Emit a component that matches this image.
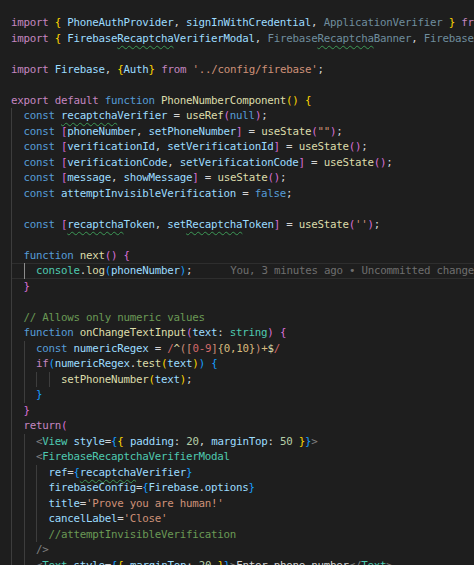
import React from 'react';

// token colours (VS Code Dark+ with bracket pair colours)
const C = {
  kw: 'text-[#c586c0]',
  st: 'text-[#569cd6]',
  v: 'text-[#9cdcfe]',
  vd: 'text-[#6f8d9d]',
  fn: 'text-[#dcdcaa]',
  s: 'text-[#ce9178]',
  c: 'text-[#6a9955]',
  t: 'text-[#4ec9b0]',
  n: 'text-[#b5cea8]',
  p: 'text-[#d4d4d4]',
  g: 'text-[#808080]',
  b1: 'text-[#ffd700]',
  b2: 'text-[#da70d6]',
  b3: 'text-[#179fff]',
  re: 'text-[#d16969]',
  rq: 'text-[#d7ba7d]',
  ra: 'text-[#dcdcaa]',
  rg: 'text-[#ce9178]',
};

const squiggle = 'underline decoration-wavy decoration-[#3c9a56] decoration-1 underline-offset-[3px]';

// [indent, segments, options]
const lines = [
  [0, [['import', 'kw'], [' '], ['{', 'b1'], [' '], ['PhoneAuthProvider', 'v'], [', '], ['signInWithCredential', 'v'], [', '], ['ApplicationVerifier', 'vd'], [' '], ['}', 'b1'], [' '], ['from', 'kw'], [' '], ["'firebase/auth'", 's'], [';']]],
  [0, [['import', 'kw'], [' '], ['{', 'b1'], [' '], ['Firebase', 'v'], ['Recaptcha', 'v', true], ['VerifierModal', 'v'], [', '], ['Firebase', 'vd'], ['Recaptcha', 'vd', true], ['Banner', 'vd'], [', '], ['FirebaseAuthApplicationVerifier', 'vd'], [' '], ['}', 'b1']]],
  [0, []],
  [0, [['import', 'kw'], [' '], ['Firebase', 'v'], [', '], ['{', 'b1'], ['Auth', 'v'], ['}', 'b1'], [' '], ['from', 'kw'], [' '], ["'../config/firebase'", 's'], [';']]],
  [0, []],
  [0, [['export', 'kw'], [' '], ['default', 'kw'], [' '], ['function', 'st'], [' '], ['PhoneNumberComponent', 'fn'], ['()', 'b1'], [' '], ['{', 'b1']]],
  [2, [['const', 'st'], [' '], ['recaptcha', 'v', true], ['Verifier', 'v'], [' = '], ['useRef', 'fn'], ['(', 'b2'], ['null', 'st'], [')', 'b2'], [';']]],
  [2, [['const', 'st'], [' '], ['[', 'b2'], ['phoneNumber', 'v'], [', '], ['setPhoneNumber', 'v'], [']', 'b2'], [' = '], ['useState', 'fn'], ['(', 'b2'], ['""', 's'], [')', 'b2'], [';']]],
  [2, [['const', 'st'], [' '], ['[', 'b2'], ['verificationId', 'v'], [', '], ['setVerificationId', 'v'], [']', 'b2'], [' = '], ['useState', 'fn'], ['()', 'b2'], [';']]],
  [2, [['const', 'st'], [' '], ['[', 'b2'], ['verificationCode', 'v'], [', '], ['setVerificationCode', 'v'], [']', 'b2'], [' = '], ['useState', 'fn'], ['()', 'b2'], [';']]],
  [2, [['const', 'st'], [' '], ['[', 'b2'], ['message', 'v'], [', '], ['showMessage', 'v'], [']', 'b2'], [' = '], ['useState', 'fn'], ['()', 'b2'], [';']]],
  [2, [['const', 'st'], [' '], ['attemptInvisibleVerification', 'v'], [' = '], ['false', 'st'], [';']]],
  [0, [], { guides: 1 }],
  [2, [['const', 'st'], [' '], ['[', 'b2'], ['recaptcha', 'v', true], ['Token', 'v'], [', '], ['set', 'v'], ['Recaptcha', 'v', true], ['Token', 'v'], [']', 'b2'], [' = '], ['useState', 'fn'], ['(', 'b2'], ["''", 's'], [')', 'b2'], [';']]],
  [0, [], { guides: 1 }],
  [2, [['function', 'st'], [' '], ['next', 'fn'], ['()', 'b2'], [' '], ['{', 'b2']]],
  [4, [['console', 't'], ['.'], ['log', 'fn'], ['(', 'b3'], ['phoneNumber', 'v'], [')', 'b3'], [';']], { active: 1, blame: 'You, 3 minutes ago \u2022 Uncommitted changes' }],
  [2, [['}', 'b2']]],
  [0, [], { guides: 1 }],
  [2, [['// Allows only numeric values', 'c']]],
  [2, [['function', 'st'], [' '], ['onChangeTextInput', 'fn'], ['(', 'b2'], ['text', 'v'], [': '], ['string', 't'], [')', 'b2'], [' '], ['{', 'b2']]],
  [4, [['const', 'st'], [' '], ['numericRegex', 'v'], [' = '], ['/', 're'], ['^', 'ra'], ['(', 'rg'], ['[', 'rg'], ['0-9', 're'], [']', 'rg'], ['{0,10}', 'rq'], [')', 'rg'], ['+', 'rq'], ['$', 'ra'], ['/', 're']]],
  [4, [['if', 'kw'], ['(', 'b3'], ['numericRegex', 'v'], ['.'], ['test', 'fn'], ['(', 'b1'], ['text', 'v'], [')', 'b1'], [')', 'b3'], [' '], ['{', 'b3']]],
  [8, [['setPhoneNumber', 'fn'], ['(', 'b1'], ['text', 'v'], [')', 'b1'], [';']]],
  [4, [['}', 'b3']]],
  [2, [['}', 'b2']]],
  [2, [['return', 'kw'], ['(', 'b2']]],
  [4, [['<', 'g'], ['View', 't'], [' '], ['style', 'v'], ['='], ['{', 'b3'], ['{', 'b1'], [' '], ['padding', 'v'], [': '], ['20', 'n'], [', '], ['marginTop', 'v'], [': '], ['50', 'n'], [' '], ['}', 'b1'], ['}', 'b3'], ['>', 'g']]],
  [4, [['<', 'g'], ['FirebaseRecaptchaVerifierModal', 't']]],
  [6, [['ref', 'v'], ['='], ['{', 'b3'], ['recaptcha', 'v', true], ['Verifier', 'v'], ['}', 'b3']]],
  [6, [['firebaseConfig', 'v'], ['='], ['{', 'b3'], ['Firebase', 'v'], ['.'], ['options', 'v'], ['}', 'b3']]],
  [6, [['title', 'v'], ['='], ["'Prove you are human!'", 's']]],
  [6, [['cancelLabel', 'v'], ['='], ["'Close'", 's']]],
  [6, [['//attemptInvisibleVerification', 'c']]],
  [4, [['/>', 'g']]],
  [4, [['<', 'g'], ['Text', 't'], [' '], ['style', 'v'], ['='], ['{', 'b3'], ['{', 'b1'], [' '], ['marginTop', 'v'], [': '], ['20', 'n'], [' '], ['}', 'b1'], ['}', 'b3'], ['>', 'g'], ['Enter phone number'], ['</', 'g'], ['Text', 't'], ['>', 'g']]],
];

function CodeLine({ indent, segs, opts = {} }) {
  const guides = opts.guides ?? Math.floor(indent / 2);
  const rest = indent - guides * 2;
  return (
    <div
      className={`h-[15.5px] whitespace-pre ${
        opts.blame ? 'shadow-[inset_0_1px_0_#2e2e2e,inset_0_-1px_0_#2e2e2e]' : ''
      }`}
    >
      {Array.from({ length: guides }).map((_, i) => (
        <span
          key={i}
          className={`inline-block h-[15.5px] w-[12.5px] align-top ${
            opts.active === i ? 'shadow-[inset_1px_0_0_#8c8c8c]' : 'shadow-[inset_1px_0_0_#3d3d3d]'
          }`}
        />
      ))}
      {rest > 0 && <span>{' '.repeat(rest)}</span>}
      {segs.map(([text, key = 'p', sq], i) => (
        <span key={i} className={`${C[key]} ${sq ? squiggle : ''}`}>
          {text}
        </span>
      ))}
      {opts.blame && <span className="ml-[38px] text-[#6e6e6e]">{opts.blame}</span>}
    </div>
  );
}

export default function App() {
  return (
    <div className="w-[474px] h-[565px] overflow-hidden bg-[#1e1e1e] pt-[15.25px] pl-[11px] font-['DejaVu_Sans_Mono',monospace] text-[10.8px] tracking-[-0.25px] leading-[15.5px] text-[#d4d4d4]">
      {lines.map(([indent, segs, opts], i) => (
        <CodeLine key={i} indent={indent} segs={segs} opts={opts} />
      ))}
    </div>
  );
}
